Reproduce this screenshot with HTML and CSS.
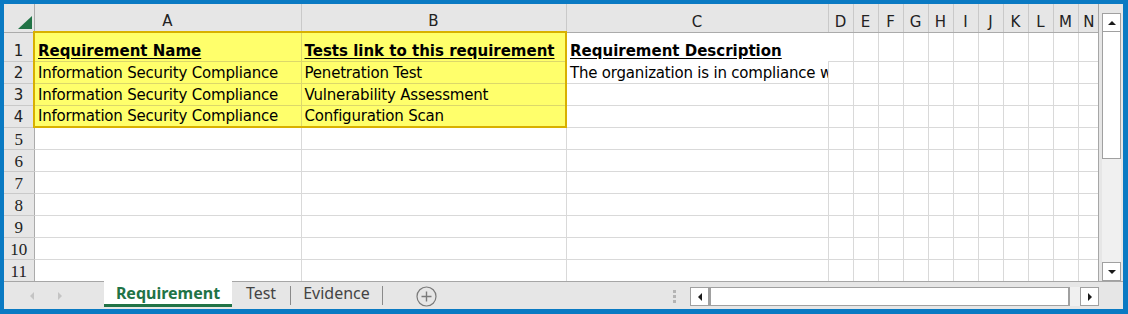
FILE: index.html
```html
<!DOCTYPE html>
<html lang="en">
<head>
  <meta charset="UTF-8" />
  <title>Requirement sheet</title>
  <link rel="stylesheet" href="styles.css">
</head>
<body>
  <div class="window">
    <div class="main">
      <div class="sheet-wrap">
        <table class="sheet">
          <colgroup>
            <col class="col-row"><col class="col-a"><col class="col-b"><col class="col-c">
            <col class="col-s"><col class="col-s"><col class="col-s"><col class="col-s"><col class="col-s">
            <col class="col-s"><col class="col-s"><col class="col-s"><col class="col-s"><col class="col-s">
            <col class="col-n">
          </colgroup>
          <thead>
            <tr class="head">
              <th class="corner"><span class="tri"></span></th>
              <th>A</th><th>B</th><th>C</th><th>D</th><th>E</th><th>F</th><th>G</th>
              <th>H</th><th>I</th><th>J</th><th>K</th><th>L</th><th>M</th><th class="last">N</th>
            </tr>
          </thead>
          <tbody>
            <tr class="r1">
              <th class="rh">1</th>
              <td class="y gt gl title">Requirement Name</td>
              <td class="y gt gr title">Tests link to this requirement</td>
              <td class="c1 title">Requirement Description</td>
              <td></td><td></td><td></td><td></td><td></td><td></td><td></td><td></td><td></td><td></td><td></td>
            </tr>
            <tr>
              <th class="rh">2</th>
              <td class="y gl">Information Security Compliance</td>
              <td class="y gr">Penetration Test</td>
              <td>The organization is in compliance with the information security policy.</td>
              <td></td><td></td><td></td><td></td><td></td><td></td><td></td><td></td><td></td><td></td><td></td>
            </tr>
            <tr>
              <th class="rh">3</th>
              <td class="y gl">Information Security Compliance</td>
              <td class="y gr">Vulnerability Assessment</td>
              <td></td>
              <td></td><td></td><td></td><td></td><td></td><td></td><td></td><td></td><td></td><td></td><td></td>
            </tr>
            <tr>
              <th class="rh">4</th>
              <td class="y gl gb">Information Security Compliance</td>
              <td class="y gr gb">Configuration Scan</td>
              <td></td>
              <td></td><td></td><td></td><td></td><td></td><td></td><td></td><td></td><td></td><td></td><td></td>
            </tr>
            <tr>
              <th class="rh serif">5</th>
              <td></td><td></td><td></td><td></td><td></td><td></td><td></td><td></td><td></td><td></td><td></td><td></td><td></td><td></td>
            </tr>
            <tr>
              <th class="rh serif">6</th>
              <td></td><td></td><td></td><td></td><td></td><td></td><td></td><td></td><td></td><td></td><td></td><td></td><td></td><td></td>
            </tr>
            <tr>
              <th class="rh serif">7</th>
              <td></td><td></td><td></td><td></td><td></td><td></td><td></td><td></td><td></td><td></td><td></td><td></td><td></td><td></td>
            </tr>
            <tr>
              <th class="rh serif">8</th>
              <td></td><td></td><td></td><td></td><td></td><td></td><td></td><td></td><td></td><td></td><td></td><td></td><td></td><td></td>
            </tr>
            <tr>
              <th class="rh serif">9</th>
              <td></td><td></td><td></td><td></td><td></td><td></td><td></td><td></td><td></td><td></td><td></td><td></td><td></td><td></td>
            </tr>
            <tr>
              <th class="rh serif">10</th>
              <td></td><td></td><td></td><td></td><td></td><td></td><td></td><td></td><td></td><td></td><td></td><td></td><td></td><td></td>
            </tr>
            <tr>
              <th class="rh serif">11</th>
              <td></td><td></td><td></td><td></td><td></td><td></td><td></td><td></td><td></td><td></td><td></td><td></td><td></td><td></td>
            </tr>
          </tbody>
        </table>
      </div>

      <!-- vertical scrollbar -->
      <div class="vscroll">
        <div class="sbtn"><span class="arr up"></span></div>
        <div class="vthumb"></div>
        <div class="vtrack"></div>
        <div class="sbtn"><span class="arr down"></span></div>
      </div>
    </div>

    <div class="tabbar">
      <div class="nav">
        <span class="arr left dim"></span>
        <span class="arr right dim"></span>
      </div>
      <div class="tab active">Requirement</div>
      <div class="tab test">Test</div>
      <div class="sep"></div>
      <div class="tab evidence">Evidence</div>
      <div class="sep"></div>
      <svg class="add" width="21" height="21" viewBox="0 0 21 21">
        <circle cx="10.5" cy="10.5" r="9.5" fill="none" stroke="#7a7a7a" stroke-width="1.2"/>
        <path d="M10.5 5.5v10M5.5 10.5h10" stroke="#7a7a7a" stroke-width="1.4"/>
      </svg>
      <div class="spacer"></div>
      <div class="grip"><i></i><i></i><i></i></div>
      <div class="hscroll">
        <div class="sbtn"><span class="arr left"></span></div>
        <div class="hthumb"></div>
        <div class="htrack"></div>
        <div class="sbtn"><span class="arr right"></span></div>
      </div>
    </div>
  </div>
</body>
</html>
```

FILE: styles.css
```css
body {
  margin: 0;
  background: #0a7ac3;
  font-family: "DejaVu Sans", sans-serif;
  overflow: hidden;
}

.window {
  margin: 4px 5px 5px 4px;
  height: 305px;
  background: #e6e6e6;
  display: flex;
  flex-direction: column;
}

.main {
  display: flex;
  height: 277px;
}

.sheet-wrap {
  width: 1095px;
  height: 277px;
  overflow: hidden;
  background: #fff;
  border-right: 1px solid #a6a6a6;
  box-sizing: border-box;
}

/* grid */
.sheet {
  border-collapse: collapse;
  table-layout: fixed;
  width: 1095px;
  font-size: 15px;
  line-height: 17px;
  color: #000;
}

.col-row { width: 30px; }
.col-a { width: 267px; }
.col-b { width: 265px; }
.col-c { width: 262px; }
.col-s { width: 25px; }
.col-n { width: 21px; }

.head { height: 28px; }
.r1 { height: 29px; }
tbody tr { height: 22px; }

th {
  background: #e6e6e6;
  font-weight: normal;
  color: #222;
  padding: 0;
  vertical-align: bottom;
  text-align: center;
}

.head th {
  border-right: 1px solid #c9c9c9;
  border-bottom: 1px solid #ababab;
  padding-bottom: 1px;
}

.head th.corner {
  border-right: 1px solid #ababab;
  text-align: right;
  padding: 0 2px 3px 0;
}

.head th.last { border-right: none; }

.tri {
  display: inline-block;
  width: 0;
  height: 0;
  border-left: 14px solid transparent;
  border-bottom: 13px solid #217346;
  vertical-align: bottom;
}

.rh {
  border-right: 1px solid #ababab;
  border-bottom: 1px solid #c9c9c9;
  padding-bottom: 1px;
}

.rh.serif {
  font-family: "Liberation Serif", serif;
  font-size: 17px;
  padding-bottom: 1px;
}

td {
  border-right: 1px solid #d9d9d9;
  border-bottom: 1px solid #d9d9d9;
  padding: 0 3px 1px;
  vertical-align: bottom;
  white-space: nowrap;
  overflow: hidden;
  letter-spacing: -0.2px;
}

td.y {
  background: #ffff6b;
  border-color: #dcd86a;
}

td.gt { border-top: 2px solid #d8b000; }
td.gl { border-left: 2px solid #d8b000; }
td.gr { border-right: 2px solid #d8b000; }
td.gb { border-bottom: 2px solid #d8b000; }

td.c1 {
  border-right-style: hidden;
  border-bottom-style: hidden;
}

.title {
  font-weight: bold;
  letter-spacing: 0;
  text-decoration: underline;
  text-underline-offset: 2px;
}

/* scrollbars */
.vscroll {
  width: 24px;
  display: flex;
  flex-direction: column;
  padding: 9px 2px 0 3px;
  box-sizing: border-box;
}

.sbtn {
  width: 19px;
  height: 19px;
  flex: none;
  background: #fff;
  border: 1px solid #a0a0a0;
  box-sizing: border-box;
  display: flex;
  align-items: center;
  justify-content: center;
}

.vthumb {
  height: 127px;
  background: #fff;
  border: 1px solid #a0a0a0;
  border-top: none;
  box-sizing: border-box;
}

.vtrack {
  flex: 1;
  background: #f0f0f0;
}

.arr {
  width: 0;
  height: 0;
  display: block;
}

.arr.up {
  border-left: 4px solid transparent;
  border-right: 4px solid transparent;
  border-bottom: 4px solid #1a1a1a;
}

.arr.down {
  border-left: 4px solid transparent;
  border-right: 4px solid transparent;
  border-top: 4px solid #1a1a1a;
}

.arr.left {
  border-top: 4px solid transparent;
  border-bottom: 4px solid transparent;
  border-right: 4px solid #1a1a1a;
}

.arr.right {
  border-top: 4px solid transparent;
  border-bottom: 4px solid transparent;
  border-left: 4px solid #1a1a1a;
}

.arr.left.dim { border-right-color: #c4c4c4; }
.arr.right.dim { border-left-color: #c4c4c4; }

/* sheet tabs */
.tabbar {
  height: 28px;
  border-top: 1px solid #a6a6a6;
  box-sizing: border-box;
  display: flex;
  align-items: flex-start;
  padding-right: 24px;
  font-family: "Noto Sans", "Open Sans", sans-serif;
  font-size: 16px;
  color: #444;
}

.nav {
  width: 100px;
  height: 27px;
  display: flex;
  align-items: center;
  gap: 24px;
  padding-left: 26px;
  box-sizing: border-box;
}

.tab {
  height: 25px;
  line-height: 23px;
  text-align: center;
  box-sizing: border-box;
}

.tab.active {
  width: 128px;
  margin-top: -1px;
  height: 26px;
  background: #fff;
  border-bottom: 3px solid #217346;
  color: #217346;
  font-weight: bold;
  line-height: 24px;
}

.tab.test { width: 58px; }
.tab.evidence { width: 91px; }

.sep {
  width: 1px;
  height: 19px;
  margin-top: 4px;
  background: #8a8a8a;
}

.add {
  margin: 4px 0 0 33px;
  flex: none;
}

.spacer { flex: 1; }

.grip {
  width: 3px;
  margin: 8px 14px 0 0;
  display: flex;
  flex-direction: column;
  gap: 2px;
}

.grip i {
  width: 3px;
  height: 3px;
  background: #b4b4b4;
}

.hscroll {
  width: 409px;
  height: 19px;
  margin-top: 5px;
  display: flex;
  background: #f0f0f0;
}

.hthumb {
  width: 361px;
  background: #fff;
  border: 1px solid #a0a0a0;
  border-left: 2px solid #a0a0a0;
  border-right-width: 2px;
  box-sizing: border-box;
}

.htrack { flex: 1; }
```
